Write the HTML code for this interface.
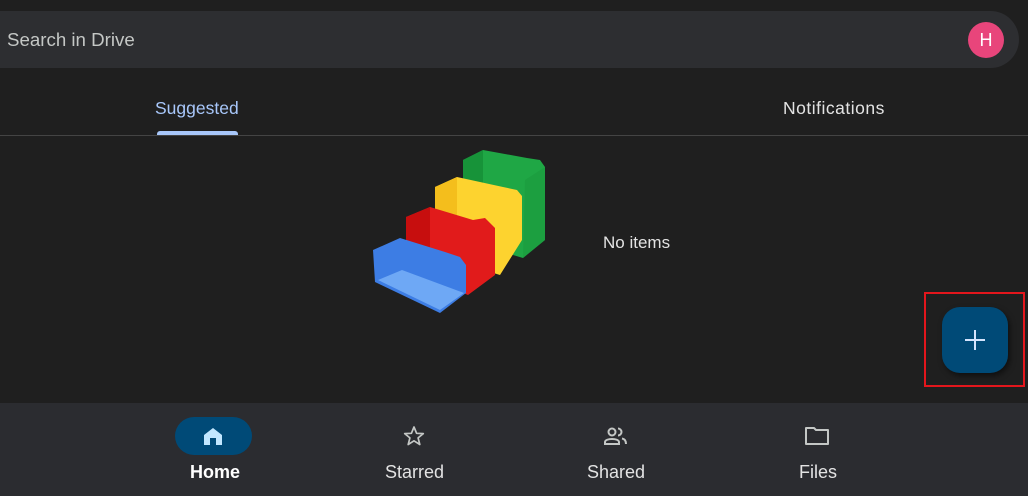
<!DOCTYPE html>
<html><head><style>
*{margin:0;padding:0;box-sizing:border-box}
body{width:1028px;height:496px;background:#1f1f1f;font-family:"Liberation Sans",sans-serif;position:relative;overflow:hidden;color:#e3e3e3}
.abs{position:absolute}
</style></head><body>
<div class="abs" style="left:-30px;top:11px;width:1049px;height:57px;background:#2d2e31;border-radius:29px"></div>
<div class="abs" style="left:7px;top:29px;font-size:18.7px;color:#c4c7c5">Search in Drive</div>
<div class="abs" style="left:968px;top:22px;width:36px;height:36px;border-radius:50%;background:#e8457b;color:#fff;font-size:18px;text-align:center;line-height:36px">H</div>
<div class="abs" style="left:155px;top:98px;font-size:17.5px;color:#a8c7fa">Suggested</div>
<div class="abs" style="left:783px;top:98px;font-size:17.5px;letter-spacing:0.5px;color:#e3e3e3">Notifications</div>
<div class="abs" style="left:157px;top:131px;width:81px;height:4px;background:#a8c7fa;border-radius:3px 3px 0 0"></div>
<div class="abs" style="left:0;top:135px;width:1028px;height:1px;background:#444"></div>
<svg class="abs" style="left:360px;top:140px" width="200" height="180" viewBox="0 0 200 180">
<polygon points="103,20 123,10 167,18 180,20 185,27 185,100 163,118 103,100" fill="#1fa745"/>
<polygon points="103,20 123,10 123,95 103,100" fill="#179339"/>
<polygon points="163,118 185,100 185,27 165,40" fill="#1a9a3e" opacity=".6"/>
<polygon points="75,47 97,37 143,47 157,50 162,56 162,100 140,135 75,115" fill="#fdd32f"/>
<polygon points="75,47 97,37 97,110 75,115" fill="#f4be1c"/>
<polygon points="46,77 70,67 113,80 125,78 135,88 135,135 108,155 46,130" fill="#e11b1b"/>
<polygon points="46,77 70,67 70,125 46,130" fill="#c70e0e"/>
<polygon points="13,110 40,98 85,112 100,117 106,125 106,153 80,173 15,142" fill="#3d7de4"/>
<polygon points="18,140 42,130 104,153 80,170" fill="#6ea8f5"/>
</svg>
<div class="abs" style="left:603px;top:233px;font-size:17px;color:#e3e3e3">No items</div>
<div class="abs" style="left:924px;top:292px;width:101px;height:95px;border:2px solid #e3161c"></div>
<div class="abs" style="left:942px;top:307px;width:66px;height:66px;border-radius:18px;background:#004a77;box-shadow:2px 3px 6px rgba(0,0,0,.5)"></div>
<div class="abs" style="left:965px;top:339px;width:20px;height:2px;background:#d3e3fd"></div>
<div class="abs" style="left:974px;top:330px;width:2px;height:20px;background:#d3e3fd"></div>
<div class="abs" style="left:0;top:403px;width:1028px;height:93px;background:#2b2c30"></div>
<div class="abs" style="left:175px;top:417px;width:77px;height:38px;border-radius:19px;background:#004a77"></div>
<svg class="abs" style="left:202px;top:426px" width="22" height="20" viewBox="0 0 22 20"><path d="M11 2 L20 9 V19 H14 V12 H8 V19 H2 V9 Z" fill="#c2e7ff"/></svg>
<svg class="abs" style="left:402px;top:424px" width="24" height="24" viewBox="0 0 24 24"><path d="M12 3 L14.6 9.3 L21.3 9.6 L16.1 13.9 L17.8 20.5 L12 16.8 L6.2 20.5 L7.9 13.9 L2.7 9.6 L9.4 9.3 Z" fill="none" stroke="#c4c7c5" stroke-width="1.7" stroke-linejoin="round"/></svg>
<svg class="abs" style="left:602px;top:424px" width="28" height="24" viewBox="0 0 28 24"><circle cx="10" cy="8" r="3.5" fill="none" stroke="#c4c7c5" stroke-width="2"/><path d="M3 20 V18 C3 14 17 14 17 18 V20 Z" fill="none" stroke="#c4c7c5" stroke-width="2"/><path d="M16 4.5 A3.5 3.5 0 0 1 16 11.5 M20 14.5 C23 15 24 17 24 20" fill="none" stroke="#c4c7c5" stroke-width="2"/></svg>
<svg class="abs" style="left:804px;top:425px" width="26" height="22" viewBox="0 0 26 22"><path d="M2 3 H10 L12 5 H24 V19 H2 Z" fill="none" stroke="#c4c7c5" stroke-width="2" stroke-linejoin="round"/></svg>
<div class="abs" style="left:190px;top:462px;font-size:18px;font-weight:bold;color:#fff">Home</div>
<div class="abs" style="left:385px;top:462px;font-size:18px;color:#e3e3e3">Starred</div>
<div class="abs" style="left:587px;top:462px;font-size:18px;color:#e3e3e3">Shared</div>
<div class="abs" style="left:799px;top:462px;font-size:18px;color:#e3e3e3">Files</div>
</body></html>
